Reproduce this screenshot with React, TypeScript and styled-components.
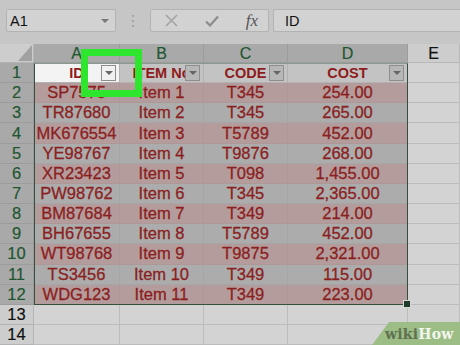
import React from "react";
import styled, { createGlobalStyle } from "styled-components";

const Global = createGlobalStyle`
  html, body { margin: 0; padding: 0; }
  body {
    background: #c6c6c6;
    font-family: "Liberation Sans", Arial, sans-serif;
    overflow: hidden;
  }
`;

const Page = styled.div`
  position: relative;
  width: 460px;
  height: 345px;
  overflow: hidden;
  background: #c6c6c6;
`;

const Toolbar = styled.div`
  display: flex;
  align-items: flex-start;
  height: 44px;
  box-sizing: border-box;
  padding: 9px 0 0 6px;
`;

const Box = styled.div<{ $w?: number }>`
  box-sizing: border-box;
  height: 23px;
  ${(p) => (p.$w ? `width: ${p.$w}px;` : "flex: 1;")}
  background: #d2d2d2;
  border: 1px solid #b3b3b3;
  border-radius: 2px;
  display: flex;
  align-items: center;
`;

const NameBox = styled(Box)`
  justify-content: space-between;
  padding: 0 6px 0 3px;
  font-size: 14.5px;
  color: #111;
`;

const Caret = styled.span`
  width: 0;
  height: 0;
  border-left: 4px solid transparent;
  border-right: 4px solid transparent;
  border-top: 4px solid #777;
`;

const Dots = styled.div`
  width: 34px;
  height: 23px;
  display: flex;
  flex-direction: column;
  align-items: center;
  justify-content: center;
  gap: 3px;
  span {
    width: 2px;
    height: 2px;
    border-radius: 1px;
    background: #999;
  }
`;

const FxGroup = styled(Box)`
  justify-content: space-between;
  padding: 0 10px 0 14px;
  margin-right: 4px;
`;

const FxText = styled.span`
  font-family: "Liberation Serif", "Times New Roman", serif;
  font-style: italic;
  font-size: 17px;
  color: #555;
`;

const Formula = styled(Box)`
  padding-left: 11px;
  font-size: 14.5px;
  color: #111;
  border-right: none;
  border-radius: 2px 0 0 2px;
`;

const Grid = styled.div`
  display: grid;
  grid-template-columns: 34px 86px 84px 84px 120px 1fr;
  grid-template-rows: 19px repeat(14, 20.17px);
`;

const Cell = styled.div<{ $bg: string; $line?: string; $r: number; $c: number }>`
  grid-row: ${(p) => p.$r};
  grid-column: ${(p) => p.$c};
  position: relative;
  box-sizing: border-box;
  background: ${(p) => p.$bg};
  border-right: 1px solid ${(p) => p.$line || "#bcbcbc"};
  border-bottom: 1px solid ${(p) => p.$line || "#bcbcbc"};
  display: flex;
  align-items: center;
  justify-content: center;
  overflow: hidden;
  white-space: nowrap;
`;

const ColHead = styled(Cell)<{ $sel: boolean }>`
  font-size: 16px;
  color: ${(p) => (p.$sel ? "#1f5630" : "#111")};
  padding-top: 2px;
  -webkit-text-stroke: 0.2px currentColor;
`;

const RowHead = styled(Cell)<{ $sel: boolean }>`
  font-size: 16.5px;
  color: ${(p) => (p.$sel ? "#1f5630" : "#111")};
  -webkit-text-stroke: 0.2px currentColor;
`;

const Corner = styled(Cell)`
  svg {
    position: absolute;
    right: 1px;
    bottom: 1px;
  }
`;

const HeadCell = styled(Cell)`
  font-weight: bold;
  font-size: 14.5px;
  color: #8e1c1c;
`;

const DataCell = styled(Cell)`
  font-size: 16.5px;
  color: #8b1f1f;
  -webkit-text-stroke: 0.3px currentColor;
`;

const DropBtn = styled.span<{ $light?: boolean }>`
  position: absolute;
  right: 3px;
  top: 2px;
  width: 15px;
  height: 16px;
  box-sizing: border-box;
  background: ${(p) => (p.$light ? "#f1f1f1" : "#b7b7b7")};
  border: 1px solid #8e8e8e;
  display: flex;
  align-items: center;
  justify-content: center;
  &::after {
    content: "";
    border-left: 4px solid transparent;
    border-right: 4px solid transparent;
    border-top: 4px solid #666;
  }
`;

const Frame = styled.div`
  grid-column: 2 / 6;
  grid-row: 2 / 14;
  box-sizing: border-box;
  border: 1px solid #34503c;
  border-top-color: #8a9a8e;
  position: relative;
  pointer-events: none;
`;

const Handle = styled.span`
  position: absolute;
  right: -4px;
  bottom: -4px;
  width: 6px;
  height: 6px;
  background: #1c3a25;
  border: 1px solid #d8d8d8;
`;

const Highlight = styled.div`
  position: absolute;
  left: 81px;
  top: 49px;
  width: 61px;
  height: 48px;
  box-sizing: border-box;
  border: 7px solid #2ee62e;
  pointer-events: none;
`;

const Logo = styled.div`
  position: absolute;
  right: 0;
  bottom: 0;
  width: 88px;
  height: 23px;
  background: #9cbd85;
  clip-path: polygon(17px 0, 100% 0, 100% 100%, 0 100%);
  display: flex;
  align-items: center;
  padding-left: 13px;
  box-sizing: border-box;
  font-family: "DejaVu Serif", "Liberation Serif", serif;
  font-weight: bold;
  font-size: 14px;
  letter-spacing: 0.2px;
`;

const Wiki = styled.span`
  color: #5f7152;
`;
const How = styled.span`
  color: #f2f6ee;
`;

const cols = ["A", "B", "C", "D", "E"];
const headers = ["ID", "ITEM No", "CODE", "COST"];
const data: string[][] = [
  ["SP7575", "Item 1", "T345", "254.00"],
  ["TR87680", "Item 2", "T345", "265.00"],
  ["MK676554", "Item 3", "T5789", "452.00"],
  ["YE98767", "Item 4", "T9876", "268.00"],
  ["XR23423", "Item 5", "T098", "1,455.00"],
  ["PW98762", "Item 6", "T345", "2,365.00"],
  ["BM87684", "Item 7", "T349", "214.00"],
  ["BH67655", "Item 8", "T5789", "452.00"],
  ["WT98768", "Item 9", "T9875", "2,321.00"],
  ["TS3456", "Item 10", "T349", "115.00"],
  ["WDG123", "Item 11", "T349", "223.00"],
];

const SEL_HEAD = "#a9a9a9";
const HEAD = "#cdcdcd";
const EMPTY = "#d3d3d3";
const PINK = "#b59c9c";
const GRAY = "#acacac";

export default function App() {
  return (
    <Page>
      <Global />
      <Toolbar>
        <NameBox $w={110}>
          <span>A1</span>
          <Caret />
        </NameBox>
        <Dots>
          <span />
          <span />
          <span />
        </Dots>
        <FxGroup $w={119}>
          <svg width="13" height="13" viewBox="0 0 13 13">
            <path d="M1 1 L12 12 M12 1 L1 12" stroke="#a3a3a3" strokeWidth="1.6" fill="none" />
          </svg>
          <svg width="14" height="12" viewBox="0 0 14 12">
            <path d="M1 6.5 L5 10.5 L13 1.5" stroke="#8c8c8c" strokeWidth="2.2" fill="none" />
          </svg>
          <FxText>fx</FxText>
        </FxGroup>
        <Formula>ID</Formula>
      </Toolbar>
      <Grid>
        <Corner $r={1} $c={1} $bg={HEAD} $line="#b4b4b4">
          <svg width="14" height="16" viewBox="0 0 14 16">
            <polygon points="14,0 14,16 0,16" fill="#a1a1a1" />
          </svg>
        </Corner>
        {cols.map((c, i) => (
          <ColHead
            key={c}
            $r={1}
            $c={i + 2}
            $sel={i < 4}
            $bg={i < 4 ? SEL_HEAD : HEAD}
            $line={i < 4 ? "#9c9c9c" : "#b8b8b8"}
          >
            {c}
          </ColHead>
        ))}

        <RowHead $r={2} $c={1} $sel $bg={SEL_HEAD} $line="#9c9c9c">
          1
        </RowHead>
        {headers.map((h, i) => (
          <HeadCell key={h} $r={2} $c={i + 2} $bg={i === 0 ? "#f3f3f3" : "#c3c3c3"} $line="#b2b2b2">
            {h}
            <DropBtn $light={i === 0} />
          </HeadCell>
        ))}
        <Cell $r={2} $c={6} $bg={EMPTY} />

        {data.map((row, r) => {
          const bg = r % 2 === 0 ? PINK : GRAY;
          return (
            <React.Fragment key={r}>
              <RowHead $r={r + 3} $c={1} $sel $bg={SEL_HEAD} $line="#9c9c9c">
                {r + 2}
              </RowHead>
              {row.map((v, i) => (
                <DataCell key={i} $r={r + 3} $c={i + 2} $bg={bg} $line={r % 2 === 0 ? "#ad9797" : "#a6a6a6"}>
                  {v}
                </DataCell>
              ))}
              <Cell $r={r + 3} $c={6} $bg={EMPTY} />
            </React.Fragment>
          );
        })}

        {[13, 14].map((n) => (
          <React.Fragment key={n}>
            <RowHead $r={n + 1} $c={1} $sel={false} $bg={HEAD} $line="#b4b4b4">
              {n}
            </RowHead>
            {cols.map((c, i) => (
              <Cell key={c} $r={n + 1} $c={i + 2} $bg={EMPTY} />
            ))}
          </React.Fragment>
        ))}

        <Frame>
          <Handle />
        </Frame>
      </Grid>
      <Highlight />
      <Logo>
        <Wiki>wiki</Wiki>
        <How>How</How>
      </Logo>
    </Page>
  );
}
